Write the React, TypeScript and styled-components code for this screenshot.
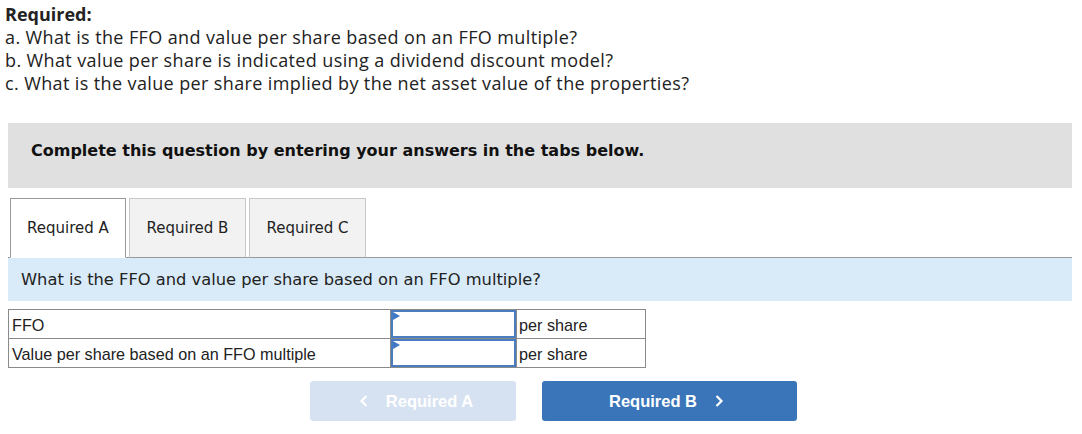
import React, { useState } from "react";
import styled, { createGlobalStyle } from "styled-components";

const GlobalStyle = createGlobalStyle`
  body {
    margin: 0;
    background: #ffffff;
  }
`;

const Page = styled.div`
  padding: 3px 10px 0 8px;
  width: 1064px;
`;

const Required = styled.div`
  font-family: "Open Sans", Lato, sans-serif;
  font-size: 18px;
  line-height: 23px;
  color: #222;
  margin-left: -3px;
  letter-spacing: 0.38px;
`;

const ReqTitle = styled.div`
  font-weight: 700;
  letter-spacing: 0;
`;

const Instruction = styled.div`
  margin-top: 28px;
  height: 65px;
  box-sizing: border-box;
  background: #e0e0e0;
  padding: 18px 0 0 23px;
  font-family: "DejaVu Sans", Verdana, sans-serif;
  font-weight: 700;
  font-size: 16px;
  line-height: 20px;
  color: #111;
`;

const TabBar = styled.div`
  display: flex;
  gap: 3px;
  margin-top: 10px;
  padding-left: 2px;
  border-bottom: 1px solid #9a9a9a;
`;

const Tab = styled.button<{ $active?: boolean }>`
  width: ${({ $active }) => ($active ? "116px" : "117px")};
  height: 60px;
  margin-bottom: -1px;
  border: 1px solid ${({ $active }) => ($active ? "#9a9a9a" : "#c8c8c8")};
  border-bottom: ${({ $active }) => ($active ? "1px solid #fff" : "1px solid #9a9a9a")};
  background: ${({ $active }) => ($active ? "#ffffff" : "#f2f2f2")};
  font-family: "DejaVu Sans", Verdana, sans-serif;
  font-size: 15px;
  color: #222;
  cursor: pointer;
  padding: 0;
`;

const Question = styled.div`
  height: 43px;
  background: #d9ebf8;
  display: flex;
  align-items: center;
  padding-left: 13px;
  font-family: "DejaVu Sans", Verdana, sans-serif;
  font-size: 16.3px;
  color: #222;
`;

const Table = styled.table`
  margin-top: 8px;
  border-collapse: collapse;
  font-family: "Liberation Sans", Arial, sans-serif;
  font-size: 16.2px;
  color: #222;
`;

const Cell = styled.td<{ $w: number; $pad: number }>`
  width: ${({ $w }) => $w}px;
  height: 26px;
  border: 1px solid #8a8a8a;
  padding: 2px 0 0 ${({ $pad }) => $pad}px;
  box-sizing: content-box;
  line-height: 24px;
`;

const InputCell = styled.td`
  width: 125px;
  height: 28px;
  border: 1px solid #8a8a8a;
  padding: 0;
  position: relative;
`;

const Entry = styled.input`
  display: block;
  width: 125px;
  height: 28px;
  box-sizing: border-box;
  border: 2px solid #4a7cc0;
  outline: none;
  background: #fff;
  font-family: "Liberation Sans", Arial, sans-serif;
  font-size: 15px;
`;

const Flag = styled.span`
  position: absolute;
  left: 2px;
  top: 2px;
  width: 0;
  height: 0;
  border-top: 4px solid transparent;
  border-bottom: 4px solid transparent;
  border-left: 7px solid #3f78c4;
`;

const Nav = styled.div`
  display: flex;
  gap: 26px;
  margin-top: 13px;
  padding-left: 302px;
`;

const NavButton = styled.button<{ $disabled?: boolean; $w: number }>`
  width: ${({ $w }) => $w}px;
  height: 40px;
  border: none;
  border-radius: 3px;
  background: ${({ $disabled }) => ($disabled ? "#d6e2f1" : "#3a75b9")};
  color: #fff;
  font-family: "Liberation Sans", Arial, sans-serif;
  font-weight: 700;
  font-size: 16.5px;
  display: flex;
  align-items: center;
  justify-content: center;
  gap: 17px;
  padding: ${({ $disabled }) => ($disabled ? "0 0 0 6px" : "0 6px 0 0")};
  cursor: ${({ $disabled }) => ($disabled ? "default" : "pointer")};
`;

const Chevron: React.FC<{ dir: "left" | "right" }> = ({ dir }) => (
  <svg width="10" height="14" viewBox="0 0 10 14">
    <path
      d={dir === "left" ? "M7.5 2 L2.5 7 L7.5 12" : "M2.5 2 L7.5 7 L2.5 12"}
      fill="none"
      stroke="#fff"
      strokeWidth="2.2"
    />
  </svg>
);

const rows = ["FFO", "Value per share based on an FFO multiple"];

const App: React.FC = () => {
  const [tab, setTab] = useState(0);

  return (
    <Page>
      <GlobalStyle />
      <Required>
        <ReqTitle>Required:</ReqTitle>
        <div>a. What is the FFO and value per share based on an FFO multiple?</div>
        <div>b. What value per share is indicated using a dividend discount model?</div>
        <div>c. What is the value per share implied by the net asset value of the properties?</div>
      </Required>

      <Instruction>Complete this question by entering your answers in the tabs below.</Instruction>

      <TabBar>
        {["Required A", "Required B", "Required C"].map((t, i) => (
          <Tab key={t} $active={tab === i} onClick={() => setTab(i)}>
            {t}
          </Tab>
        ))}
      </TabBar>

      <Question>What is the FFO and value per share based on an FFO multiple?</Question>

      <Table>
        <tbody>
          {rows.map((r) => (
            <tr key={r}>
              <Cell $w={378} $pad={3}>{r}</Cell>
              <InputCell>
                <Entry type="text" />
                <Flag />
              </InputCell>
              <Cell $w={126} $pad={2}>per share</Cell>
            </tr>
          ))}
        </tbody>
      </Table>

      <Nav>
        <NavButton $disabled $w={206}>
          <Chevron dir="left" />
          Required A
        </NavButton>
        <NavButton $w={255}>
          Required B
          <Chevron dir="right" />
        </NavButton>
      </Nav>
    </Page>
  );
};

export default App;
